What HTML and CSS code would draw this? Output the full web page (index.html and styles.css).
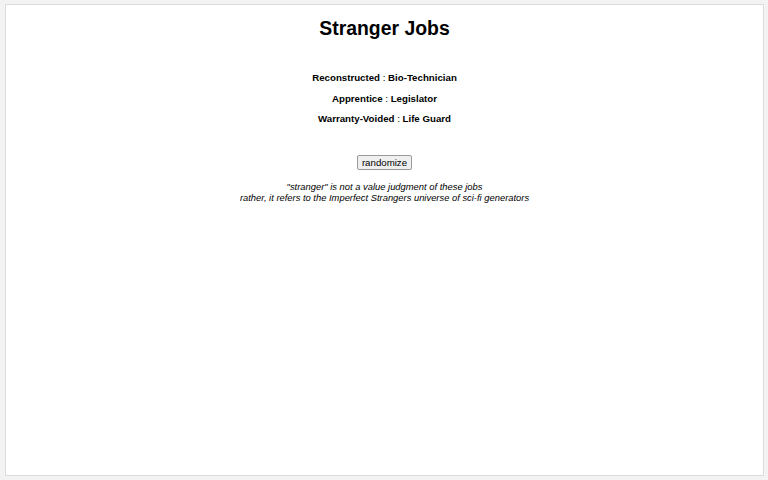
FILE: index.html
```html
<!DOCTYPE html>
<html lang="en">
<head>
<meta charset="utf-8">
<title>Stranger Jobs</title>
<link rel="stylesheet" href="styles.css">
</head>
<body>
<main class="page">
  <h1 class="title">Stranger Jobs</h1>
  <ul class="jobs">
    <li class="job"><b>Reconstructed</b> : <b>Bio-Technician</b></li>
    <li class="job"><b>Apprentice</b> : <b>Legislator</b></li>
    <li class="job"><b>Warranty-Voided</b> : <b>Life Guard</b></li>
  </ul>
  <div class="actions">
    <button class="randomize" type="button">randomize</button>
  </div>
  <p class="note">"stranger" is not a value judgment of these jobs<br>rather, it refers to the Imperfect Strangers universe of sci-fi generators</p>
</main>
</body>
</html>
```

FILE: styles.css
```css
html, body {
  margin: 0;
  height: 100%;
}

body {
  background: #f3f3f3;
  font-family: "Liberation Sans", Arial, sans-serif;
  color: #000;
  padding: 4px 4px 4px 5px;
  box-sizing: border-box;
}

.page {
  background: #fff;
  border: 1px solid #dcdcdc;
  height: 100%;
  box-sizing: border-box;
  text-align: center;
  padding-top: 12px;
}

.title {
  font-size: 19.4px;
  font-weight: bold;
  margin: 0 0 31px;
  line-height: 23px;
}

.jobs {
  list-style: none;
  margin: 0;
  padding: 0;
  font-size: 9.7px;
}

.job {
  line-height: 13px;
  margin-bottom: 7.5px;
}

.actions {
  margin-top: 27px;
}

.randomize {
  font-family: "Liberation Sans", Arial, sans-serif;
  font-size: 9.7px;
  padding: 1px 4px;
  background: #efefef;
  border: 1px solid #9a9a9a;
  border-radius: 2px;
  color: #000;
}

.note {
  font-style: italic;
  font-size: 9.4px;
  line-height: 11px;
  margin: 11px 0 0;
}
```
